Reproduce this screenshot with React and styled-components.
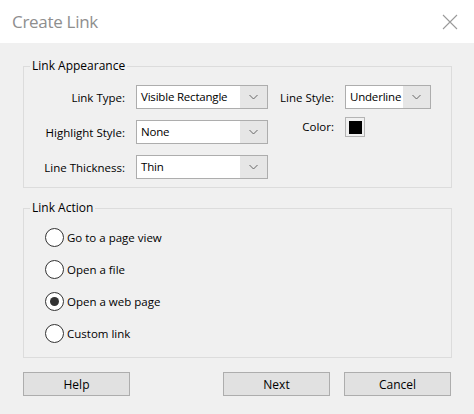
import React, { useState } from "react";
import styled, { createGlobalStyle } from "styled-components";

const GlobalStyle = createGlobalStyle`
  html, body {
    margin: 0;
    padding: 0;
    background: #f0f0f0;
  }
  body {
    font-family: "Open Sans", "Noto Sans", sans-serif;
    font-size: 11.5px;
    color: #000;
  }
`;

const Dialog = styled.div`
  width: 474px;
  height: 414px;
  background: #f0f0f0;
  display: flex;
  flex-direction: column;
`;

const TitleBar = styled.div`
  height: 43px;
  background: #fff;
  display: flex;
  align-items: center;
  justify-content: space-between;
  padding: 0 16px 0 12px;
  box-sizing: border-box;
`;

const Title = styled.h1`
  margin: 0;
  font-weight: 400;
  font-size: 17px;
  color: #8e8e8e;
  letter-spacing: -0.3px;
`;

const CloseBtn = styled.button`
  border: none;
  background: none;
  padding: 0;
  width: 16px;
  height: 16px;
  display: flex;
  cursor: pointer;
`;

const Content = styled.div`
  padding: 15px 22px 0 23px;
  display: flex;
  flex-direction: column;
`;

const Group = styled.fieldset`
  margin: 0 0 ${(p) => p.gap || 0}px;
  border: 1px solid #dcdcdc;
  padding: ${(p) => p.pad};
  min-width: 0;
`;

const Legend = styled.legend`
  padding: 0 2px;
  margin-left: 6px;
  line-height: 16px;
  font-size: 12px;
`;

const FormGrid = styled.div`
  display: grid;
  grid-template-columns: 101px 132px 55px 86px;
  column-gap: 11px;
  row-gap: 11px;
  align-items: center;
`;

const Label = styled.label`
  text-align: right;
  white-space: nowrap;
  align-self: ${(p) => p.align || "center"};
  margin-top: ${(p) => p.lift || 0}px;
`;

const SelectBox = styled.div`
  height: 24px;
  border: 1px solid #adadad;
  box-sizing: border-box;
  display: flex;
  background: #fff;
`;

const SelectValue = styled.span`
  flex: 1;
  padding-left: 4px;
  line-height: 22px;
  white-space: nowrap;
  overflow: hidden;
  letter-spacing: -0.2px;
`;

const SelectArrow = styled.span`
  width: 27px;
  flex-shrink: 0;
  background: #e6e6e6;
  display: flex;
  align-items: center;
  justify-content: center;
`;

const Swatch = styled.div`
  width: 20px;
  height: 20px;
  box-sizing: border-box;
  border: 1px solid #b4b4b4;
  background: #f0f0f0;
  display: flex;
  align-items: center;
  justify-content: center;
  align-self: start;
  margin-top: -3px;

  &::after {
    content: "";
    width: 13px;
    height: 13px;
    background: ${(p) => p.color};
  }
`;

const RadioList = styled.div`
  display: flex;
  flex-direction: column;
  gap: 12px;
  padding-left: 21px;
`;

const RadioRow = styled.label`
  display: flex;
  align-items: center;
  height: 20px;
  cursor: pointer;
`;

const RadioCircle = styled.span`
  width: 19px;
  height: 19px;
  box-sizing: border-box;
  border: 1px solid #333;
  border-radius: 50%;
  background: #fff;
  display: flex;
  align-items: center;
  justify-content: center;
  margin-right: 3px;

  &::after {
    content: "";
    width: 9px;
    height: 9px;
    border-radius: 50%;
    background: ${(p) => (p.checked ? "#333" : "transparent")};
  }
`;

const ButtonRow = styled.div`
  display: flex;
  margin-top: 14px;
`;

const Button = styled.button`
  width: 107px;
  height: 24px;
  border: 1px solid #adadad;
  background: #e1e1e1;
  font-family: inherit;
  font-size: 12px;
  color: #000;
  padding: 0;
  margin-left: ${(p) => p.ml || 0}px;
  cursor: pointer;
`;

const Chevron = () => (
  <svg width="9" height="6" viewBox="0 0 9 6">
    <path d="M0.5 1 L4.5 5 L8.5 1" fill="none" stroke="#666" strokeWidth="1" />
  </svg>
);

const Select = ({ value }) => (
  <SelectBox>
    <SelectValue>{value}</SelectValue>
    <SelectArrow>
      <Chevron />
    </SelectArrow>
  </SelectBox>
);

const actions = ["Go to a page view", "Open a file", "Open a web page", "Custom link"];

const App = () => {
  const [action, setAction] = useState("Open a web page");

  return (
    <Dialog>
      <GlobalStyle />
      <TitleBar>
        <Title>Create Link</Title>
        <CloseBtn aria-label="Close">
          <svg width="16" height="16" viewBox="0 0 16 16">
            <path d="M1 1 L15 15 M15 1 L1 15" stroke="#9a9a9a" strokeWidth="1.1" />
          </svg>
        </CloseBtn>
      </TitleBar>
      <Content>
        <Group pad="11px 0 8px 0" gap={12}>
          <Legend>Link Appearance</Legend>
          <FormGrid>
            <Label>Link Type:</Label>
            <Select value="Visible Rectangle" />
            <Label>Line Style:</Label>
            <Select value="Underline" />

            <Label>Highlight Style:</Label>
            <Select value="None" />
            <Label align="start" lift={-1}>Color:</Label>
            <Swatch color="#000" />

            <Label>Line Thickness:</Label>
            <Select value="Thin" />
          </FormGrid>
        </Group>
        <Group pad="11px 0 14px 0">
          <Legend>Link Action</Legend>
          <RadioList>
            {actions.map((a) => (
              <RadioRow key={a} onClick={() => setAction(a)}>
                <RadioCircle checked={action === a} />
                {a}
              </RadioRow>
            ))}
          </RadioList>
        </Group>
        <ButtonRow>
          <Button>Help</Button>
          <Button ml={93}>Next</Button>
          <Button ml={14}>Cancel</Button>
        </ButtonRow>
      </Content>
    </Dialog>
  );
};

export default App;
